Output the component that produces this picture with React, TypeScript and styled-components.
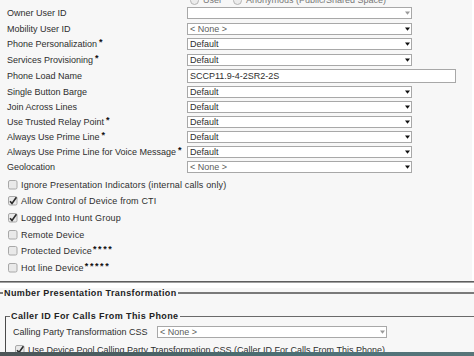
import React from "react";
import styled, { createGlobalStyle } from "styled-components";

type Field = {
  label: string;
  kind: "select" | "input";
  value: string;
  req?: boolean;
  muted?: boolean;
  height: number;
};

type Check = { label: string; checked: boolean; stars?: string };

const fields: Field[] = [
  { label: "Owner User ID", kind: "select", value: "", muted: true, height: 15.5 },
  { label: "Mobility User ID", kind: "select", value: "< None >", height: 15.5 },
  { label: "Phone Personalization", kind: "select", value: "Default", req: true, height: 15.5 },
  { label: "Services Provisioning", kind: "select", value: "Default", req: true, height: 15.5 },
  { label: "Phone Load Name", kind: "input", value: "SCCP11.9-4-2SR2-2S", height: 17 },
  { label: "Single Button Barge", kind: "select", value: "Default", height: 15 },
  { label: "Join Across Lines", kind: "select", value: "Default", height: 15 },
  { label: "Use Trusted Relay Point", kind: "select", value: "Default", req: true, height: 15 },
  { label: "Always Use Prime Line", kind: "select", value: "Default", req: true, height: 15 },
  {
    label: "Always Use Prime Line for Voice Message",
    kind: "select",
    value: "Default",
    req: true,
    height: 15,
  },
  { label: "Geolocation", kind: "select", value: "< None >", height: 15 },
];

const checks: Check[] = [
  { label: "Ignore Presentation Indicators (internal calls only)", checked: false },
  { label: "Allow Control of Device from CTI", checked: true },
  { label: "Logged Into Hunt Group", checked: true },
  { label: "Remote Device", checked: false },
  { label: "Protected Device", checked: false, stars: "****" },
  { label: "Hot line Device", checked: false, stars: "*****" },
];

const GlobalStyle = createGlobalStyle`
  html, body {
    margin: 0;
    padding: 0;
    background: #fff;
  }
  body {
    font-family: "Liberation Sans", Arial, sans-serif;
    font-size: 9px;
    color: #333;
  }
`;

const Page = styled.div`
  width: 474px;
  height: 356px;
  display: flex;
  flex-direction: column;
  overflow: hidden;
  background: #fff;
`;

const Main = styled.div`
  flex: 1;
  min-height: 0;
  overflow: hidden;
`;

const DevicePanel = styled.div`
  width: 472px;
  height: 281px;
  box-sizing: border-box;
  padding-left: 7px;
  background: #f7f7f7;
  overflow: hidden;
`;

const RadioStrip = styled.div`
  display: flex;
  align-items: center;
  gap: 11px;
  height: 11px;
  margin: -5.5px 0 0 183px;
  color: #777;
  white-space: nowrap;
`;

const RadioOption = styled.span`
  display: flex;
  align-items: center;
  gap: 4px;
`;

const RadioDot = styled.span`
  width: 7px;
  height: 7px;
  border-radius: 50%;
  border: 1px solid #b5b5b5;
  background: #ececec;
`;

const FieldRow = styled.div<{ $h: number }>`
  display: flex;
  align-items: center;
  height: ${(p) => p.$h}px;
`;

const Label = styled.span<{ $w?: number }>`
  width: ${(p) => p.$w ?? 180}px;
  flex-shrink: 0;
  white-space: nowrap;
  color: #2e2e2e;
`;

const Req = styled.span`
  font-weight: bold;
  margin-left: 2px;
  vertical-align: 2px;
  line-height: 0;
  color: #111;
`;

const SelectBox = styled.div<{ $w?: number }>`
  width: ${(p) => p.$w ?? 225}px;
  height: 12px;
  box-sizing: border-box;
  border: 1px solid #a8a8a8;
  background: #fff;
  display: flex;
  align-items: center;
  justify-content: space-between;
  padding: 0 1px 0 2px;
`;

const SelectText = styled.span<{ $dim?: boolean }>`
  color: ${(p) => (p.$dim ? "#5c5c5c" : "#2e2e2e")};
  white-space: nowrap;
`;

const TextBox = styled.div`
  width: 269px;
  height: 14px;
  box-sizing: border-box;
  border: 1px solid #a8a8a8;
  background: #fff;
  display: flex;
  align-items: center;
  padding-left: 2px;
  color: #2e2e2e;
`;

const CheckList = styled.div`
  margin-top: 2px;
  letter-spacing: 0.15px;
`;

const CheckRow = styled.div<{ $indent?: number }>`
  display: flex;
  align-items: center;
  gap: 3px;
  height: 16.6px;
  padding-left: ${(p) => p.$indent ?? 1}px;
  white-space: nowrap;
  color: #2e2e2e;
`;

const Stars = styled.span`
  font-weight: bold;
  margin-left: 1px;
  letter-spacing: 1.6px;
  vertical-align: 2px;
  line-height: 0;
  color: #111;
`;

const Divider = styled.div`
  height: 2px;
  box-sizing: border-box;
  border-top: 1px solid #5e5e5e;
  border-bottom: 1px solid #a0a0a0;
`;

const Lower = styled.div`
  background: #f7f7f7;
  height: 100%;
`;

const OuterFieldset = styled.fieldset`
  margin: 4.5px 0 0 -3px;
  padding: 12px 0 0 6px;
  border: none;
  border-top: 2px solid #7a7a7a;
  min-width: 0;
`;

const OuterLegend = styled.legend`
  padding: 0 1px;
  font-weight: bold;
  letter-spacing: 0.4px;
  line-height: 11px;
  color: #222;
`;

const InnerFieldset = styled.fieldset`
  margin: 0 0 0 2px;
  padding: 2.5px 0 0 4px;
  border: none;
  border-top: 1px solid #6a6a6a;
  border-left: 1px solid #4a4a4a;
  min-width: 0;
`;

const InnerLegend = styled(OuterLegend)``;

const CallingRow = styled(FieldRow)`
  padding-left: 3px;
`;

const Band = styled.div`
  height: 4px;
  flex-shrink: 0;
  background: linear-gradient(90deg, #4d5658 0%, #4a5f62 25%, #4a6c70 50%, #50737a 75%, #587579 100%);
`;

const Arrow = ({ muted }: { muted?: boolean }) => (
  <svg width="5" height="4" viewBox="0 0 5 4">
    <path d="M0 0.5H5L2.5 3.8Z" fill={muted ? "#9a9a9a" : "#111"} />
  </svg>
);

const CheckBox = ({ checked }: { checked: boolean }) => (
  <svg width="10" height="10" viewBox="0 0 10 10">
    <rect x="0.5" y="0.5" width="8.5" height="8.5" rx="1.5" fill="#e9e9e9" stroke="#a8a8a8" />
    {checked && (
      <path d="M2 5.2L4 7.4L8.4 1.2" fill="none" stroke="#2a2a2a" strokeWidth="1.6" />
    )}
  </svg>
);

const Select = ({ value, muted, width }: { value: string; muted?: boolean; width?: number }) => (
  <SelectBox $w={width}>
    <SelectText $dim={value.startsWith("<")}>{value}</SelectText>
    <Arrow muted={muted} />
  </SelectBox>
);

export default function App() {
  return (
    <Page>
      <GlobalStyle />
      <Main>
        <DevicePanel>
          <RadioStrip>
            <RadioOption>
              <RadioDot />
              User
            </RadioOption>
            <RadioOption>
              <RadioDot />
              Anonymous (Public/Shared Space)
            </RadioOption>
          </RadioStrip>
          {fields.map((f) => (
            <FieldRow key={f.label} $h={f.height}>
              <Label>
                {f.label}
                {f.req && <Req>*</Req>}
              </Label>
              {f.kind === "input" ? (
                <TextBox>{f.value}</TextBox>
              ) : (
                <Select value={f.value} muted={f.muted} />
              )}
            </FieldRow>
          ))}
          <CheckList>
            {checks.map((c) => (
              <CheckRow key={c.label}>
                <CheckBox checked={c.checked} />
                <span>
                  {c.label}
                  {c.stars && <Stars>{c.stars}</Stars>}
                </span>
              </CheckRow>
            ))}
          </CheckList>
        </DevicePanel>
        <Divider />
        <Lower>
          <OuterFieldset>
            <OuterLegend>Number Presentation Transformation</OuterLegend>
            <InnerFieldset>
              <InnerLegend>Caller ID For Calls From This Phone</InnerLegend>
              <CallingRow $h={15}>
                <Label $w={144}>Calling Party Transformation CSS</Label>
                <Select value="< None >" muted width={230} />
              </CallingRow>
              <CheckRow $indent={5} style={{ marginTop: 3 }}>
                <CheckBox checked />
                <span>
                  Use Device Pool Calling Party Transformation CSS (Caller ID For Calls From
                  This Phone)
                </span>
              </CheckRow>
            </InnerFieldset>
          </OuterFieldset>
        </Lower>
      </Main>
      <Band />
    </Page>
  );
}
